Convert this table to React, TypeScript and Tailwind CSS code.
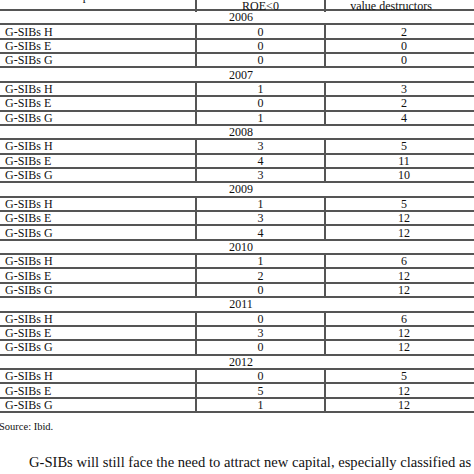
import React from "react";

const years: { year: string; rows: [string, string, string][] }[] = [
  { year: "2006", rows: [["G-SIBs H", "0", "2"], ["G-SIBs E", "0", "0"], ["G-SIBs G", "0", "0"]] },
  { year: "2007", rows: [["G-SIBs H", "1", "3"], ["G-SIBs E", "0", "2"], ["G-SIBs G", "1", "4"]] },
  { year: "2008", rows: [["G-SIBs H", "3", "5"], ["G-SIBs E", "4", "11"], ["G-SIBs G", "3", "10"]] },
  { year: "2009", rows: [["G-SIBs H", "1", "5"], ["G-SIBs E", "3", "12"], ["G-SIBs G", "4", "12"]] },
  { year: "2010", rows: [["G-SIBs H", "1", "6"], ["G-SIBs E", "2", "12"], ["G-SIBs G", "0", "12"]] },
  { year: "2011", rows: [["G-SIBs H", "0", "6"], ["G-SIBs E", "3", "12"], ["G-SIBs G", "0", "12"]] },
  { year: "2012", rows: [["G-SIBs H", "0", "5"], ["G-SIBs E", "5", "12"], ["G-SIBs G", "1", "12"]] },
];

export default function App() {
  return (
    <div
      className="w-[474px] h-[474px] overflow-hidden bg-white text-[#111]"
      style={{ fontFamily: '"Liberation Serif", "Times New Roman", serif' }}
    >
      <div className="w-[482px] text-[12px]">
        {/* header */}
        <div className="grid grid-cols-[195px_131px_1fr] h-[11px] border-b-2 border-[#555]">
          <div className="relative overflow-hidden">
            <span className="absolute left-[58px] top-[-10px] leading-[12px]">Group</span>
          </div>
          <div className="border-x-2 border-[#555] flex items-end justify-center leading-[12px]">
            ROE&lt;0
          </div>
          <div className="flex items-end justify-center leading-[12px] pr-[26px]">value destructors</div>
        </div>
        {years.map((g) => (
          <div key={g.year}>
            <div className="h-[14.36px] border-b-2 border-[#555] flex items-center justify-center leading-none">
              {g.year}
            </div>
            {g.rows.map((r, i) => (
              <div
                key={i}
                className="grid grid-cols-[195px_131px_1fr] h-[14.36px] border-b-2 border-[#555] leading-none"
              >
                <div className="flex items-center pl-[5px]">{r[0]}</div>
                <div className="border-x-2 border-[#555] flex items-center justify-center">{r[1]}</div>
                <div className="flex items-center justify-center">{r[2]}</div>
              </div>
            ))}
          </div>
        ))}
      </div>
      <div className="text-[10.5px] mt-[9px] ml-[-1px] leading-none">Source: Ibid.</div>
      <div className="text-[14.6px] mt-[22px] pl-[29px] whitespace-nowrap leading-none">
        G-SIBs will still face the need to attract new capital, especially classified as
      </div>
    </div>
  );
}
